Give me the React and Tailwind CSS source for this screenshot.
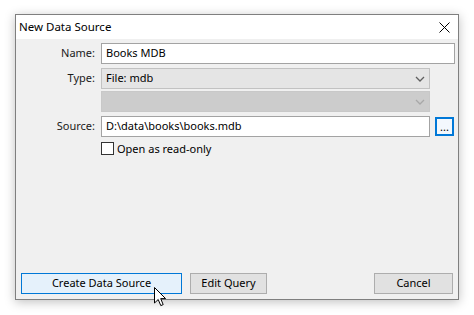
import React from "react";

function Chevron({ color }) {
  return (
    <svg width="10" height="6" viewBox="0 0 10 6" className="shrink-0">
      <path d="M1 1 L5 5 L9 1" fill="none" stroke={color} strokeWidth="1.3" />
    </svg>
  );
}

function Cursor() {
  return (
    <svg width="13" height="20" viewBox="0 0 13 20" className="absolute left-[154px] top-[287px]">
      <path
        d="M0.5 0.5 L0.5 16 L4.2 12.5 L6.8 18.6 L9.2 17.6 L6.7 11.6 L11.6 11.6 Z"
        fill="#fff"
        stroke="#000"
        strokeWidth="1"
        strokeLinejoin="miter"
      />
    </svg>
  );
}

export default function App() {
  return (
    <div
      className="relative w-[474px] h-[315px] bg-white overflow-hidden text-[11px] text-black"
      style={{ fontFamily: '"Noto Sans", "Open Sans", sans-serif' }}
    >
      <div className="absolute left-[15px] top-[14px] w-[444px] h-[286px] border border-[#7f7f7f] shadow-[0_2px_10px_rgba(0,0,0,0.25)] flex flex-col bg-[#f0f0f0]">
        <div className="h-[24px] bg-white flex items-center justify-between pl-[3px] pr-[8px]">
          <span className="leading-none text-[11.5px]">New Data Source</span>
          <svg width="11" height="11" viewBox="0 0 11 11">
            <path d="M0.5 0.5 L10.5 10.5 M10.5 0.5 L0.5 10.5" stroke="#000" strokeWidth="1" />
          </svg>
        </div>
        <div className="flex-1 flex flex-col pt-[4px] pr-[3px]">
          <div className="flex items-center h-[21px]">
            <div className="w-[80px] text-right pr-[1px] text-[#1a1a1a]">Name:</div>
            <div className="ml-[5px] w-[354px] h-[21px] bg-white border border-[#a3a3a3] flex items-center pl-[4px]">
              Books MDB
            </div>
          </div>
          <div className="flex items-center h-[21px] mt-[4px]">
            <div className="w-[80px] text-right pr-[1px] text-[#1a1a1a]">Type:</div>
            <div className="ml-[5px] w-[329px] h-[21px] bg-[#e5e5e5] border border-[#c2c2c2] flex items-center justify-between pl-[4px] pr-[4px]">
              <span>File: mdb</span>
              <Chevron color="#606060" />
            </div>
          </div>
          <div className="flex items-center h-[21px] mt-[2px]">
            <div className="w-[80px]"></div>
            <div className="ml-[5px] w-[329px] h-[21px] bg-[#cccccc] border border-[#c8c8c8] flex items-center justify-end pr-[4px]">
              <Chevron color="#a8a8a8" />
            </div>
          </div>
          <div className="flex items-center h-[21px] mt-[4px]">
            <div className="w-[80px] text-right pr-[1px] text-[#1a1a1a]">Source:</div>
            <div className="ml-[5px] w-[329px] h-[21px] bg-white border border-[#a3a3a3] flex items-center pl-[4px]">
              D:\data\books\books.mdb
            </div>
            <div className="ml-[5px] w-[19px] h-[19px] border-2 border-[#0078d7] bg-[#f3f8fd] flex items-end justify-center text-[11px] leading-[12px] pb-[1px]">
              ...
            </div>
          </div>
          <div className="flex items-center mt-[5px] ml-[85px] h-[13px]">
            <div className="w-[13px] h-[13px] border border-[#333] bg-white"></div>
            <span className="ml-[3px] leading-[13px]">Open as read-only</span>
          </div>
          <div className="flex-1"></div>
          <div className="flex items-center h-[21px] mb-[5px] pl-[5px] pr-[2px]">
            <div className="w-[161px] h-[21px] bg-[#e5f1fb] border border-[#0078d7] flex items-center justify-center">
              Create Data Source
            </div>
            <div className="ml-[8px] w-[77px] h-[21px] bg-[#e1e1e1] border border-[#adadad] flex items-center justify-center">
              Edit Query
            </div>
            <div className="flex-1"></div>
            <div className="w-[79px] h-[21px] bg-[#e1e1e1] border border-[#adadad] flex items-center justify-center">
              Cancel
            </div>
          </div>
        </div>
      </div>
      <Cursor />
    </div>
  );
}
